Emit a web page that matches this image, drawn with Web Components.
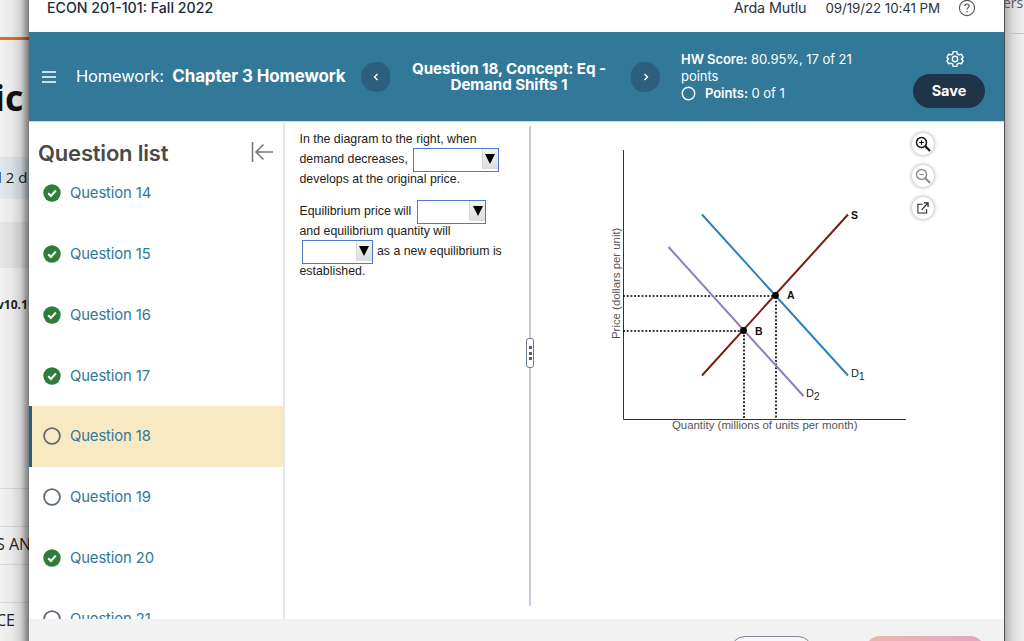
<!DOCTYPE html>
<html lang="en"><head><meta charset="utf-8"><title>Homework</title>
<style>
html,body{margin:0;padding:0;height:641px;overflow:hidden;background:#fff}
</style></head><body>
<desk-view>
  <back-left slot="left"></back-left>
  <hw-window slot="main">
    <top-bar></top-bar>
    <hw-bar></hw-bar>
    <hw-body>
      <q-list slot="list">
        <q-item state="done">Question 14</q-item>
        <q-item state="done">Question 15</q-item>
        <q-item state="done">Question 16</q-item>
        <q-item state="done">Question 17</q-item>
        <q-item state="open" current>Question 18</q-item>
        <q-item state="open">Question 19</q-item>
        <q-item state="done">Question 20</q-item>
        <q-item state="open">Question 21</q-item>
      </q-list>
      <q-text slot="text"></q-text>
      <graph-panel slot="graph"></graph-panel>
    </hw-body>
    <foot-bar></foot-bar>
  </hw-window>
  <back-right slot="right"></back-right>
</desk-view>
<script>
function def(name, css, html, extra){
  const tpl=document.createElement('template');
  tpl.innerHTML='<style>'+css+'</style>'+html;
  customElements.define(name,class extends HTMLElement{
    constructor(){super();this.attachShadow({mode:'open'}).appendChild(tpl.content.cloneNode(true));}
    connectedCallback(){if(extra)extra.call(this);}
  });
}
const INTER='Inter,"Liberation Sans",sans-serif', ARIAL='"Liberation Sans",Arial,sans-serif';

def('desk-view',`:host{display:grid;grid-template-columns:29px 975px 20px;height:641px;overflow:hidden}`,
`<slot name="left"></slot><slot name="main"></slot><slot name="right"></slot>`);

def('back-left',`:host{display:block;position:relative;height:641px;overflow:hidden;font-family:"Open Sans",sans-serif;color:#222;
 background:#f2f2f2}
 .shade{position:absolute;inset:0;background:linear-gradient(90deg,rgba(0,0,0,0) 0,rgba(0,0,0,.04) 40%,rgba(0,0,0,.14) 72%,rgba(0,0,0,.5) 100%)}
 .a{position:absolute;white-space:nowrap}
 .l{position:absolute;left:0;right:0;height:1px;background:#dcdcdc}`,
`<div class="a" style="left:0;top:37px;width:29px;height:3px;background:#d9732b"></div>
 <div class="a" style="left:-6px;top:76px;font-size:36px;font-weight:700;line-height:44px;color:#111">ic</div>
 <div class="a" style="left:0;top:157px;width:29px;height:42px;background:#dfe8ee"></div>
 <div class="a" style="left:-2px;top:167px;font-size:15px;line-height:20px">l 2 d</div>
 <div class="a" style="left:0;top:222px;width:29px;height:46px;background:#e6e6e6"></div>
 <div class="a" style="left:-3px;top:296px;font-size:12px;font-weight:700;line-height:18px">v10.1</div>
 <div class="l" style="top:488px"></div><div class="l" style="top:526px"></div><div class="l" style="top:564px"></div><div class="l" style="top:602px"></div>
 <div class="a" style="left:-4px;top:534px;font-size:16px;line-height:20px">S AN</div>
 <div class="a" style="left:-4px;top:610px;font-size:16px;line-height:20px">CE</div>
 <div class="shade"></div>`);

def('back-right',`:host{display:block;position:relative;height:641px;overflow:hidden;box-sizing:border-box;border-left:1px solid #4d4d4d;
 background:linear-gradient(90deg,#b5b5b5 0,#dedede 45%,#efefef 100%);font-family:"Open Sans",sans-serif;color:#555}
 div{position:absolute;left:-2px;top:-6px;font-size:14px;line-height:18px;white-space:nowrap}
 i{position:absolute;left:0;right:0;top:33px;height:1px;background:#c4c4c4}`,`<div>ers</div><i></i>`);

def('hw-window',`:host{display:flex;flex-direction:column;height:641px;background:#fff;overflow:hidden}`,`<slot></slot>`);

def('top-bar',`:host{display:flex;align-items:center;height:32px;box-sizing:border-box;padding:0 28px 16px 18px;font:500 14.2px/16px ${INTER};color:#1c2a3d;background:#fff;flex:none}
 .c{flex:1}.n{font-weight:400;font-size:14.3px;color:#2b3442;letter-spacing:-.1px}
 .d{margin-left:19px;font-size:13.4px}
 svg{margin-left:18px;display:block}`,
`<span class="c">ECON 201-101: Fall 2022</span><span class="n">Arda Mutlu</span><span class="n d">09/19/22 10:41 PM</span>
 <svg width="18" height="18" viewBox="0 0 18 18" fill="none" stroke="#555"><circle cx="9" cy="9" r="7.6" stroke-width="1.1"/><path d="M6.8 7.1c0-1.3 1-2.1 2.2-2.1s2.2.8 2.2 2c0 1.6-2.2 1.7-2.2 3.4" stroke-width="1.2"/><circle cx="9" cy="12.8" r=".8" fill="#555" stroke="none"/></svg>`);

def('hw-bar',`:host{display:flex;align-items:center;height:90px;background:#327899;color:#fff;font-family:${INTER};box-sizing:border-box;border-bottom:1px solid #cfd9e0;flex:none}
 .menu{width:14px;height:12px;margin-left:13px;flex:none;display:block}
 .hw{margin-left:20px;font-size:16.4px;line-height:20px;white-space:nowrap;width:285px;flex:none;letter-spacing:-.1px;margin-top:-1px}
 .hw b{font-weight:700;margin-left:4px;font-size:16.9px}
 .nav{width:29px;height:30px;background:#2c5f7e;border-radius:15px 13px 13px 15px;display:flex;align-items:center;justify-content:center;flex:none;margin-left:0}
 .title{width:226px;flex:none;text-align:center;font:700 15.2px/16px ${INTER};letter-spacing:-.1px;margin-left:6px;margin-right:9px;box-sizing:border-box;padding-left:0}
 .score{margin-left:21px;width:196px;flex:none;font:400 13px/17px ${INTER};letter-spacing:-.05px}
 .score b{font-weight:600}
 .pts{display:flex;align-items:center}
 .pts svg{margin-right:9px;display:block}
 .act{width:72px;flex:none;margin-left:36px;display:flex;flex-direction:column;align-items:center;gap:6px;padding-top:7px}
 .act svg{display:block;margin-left:12px;margin-top:-2px}
 .save{width:72px;height:34px;border-radius:17px;background:#203449;font:700 14.5px/34px ${INTER};text-align:center}`,
`<svg class="menu" viewBox="0 0 14 12" stroke="#fff" stroke-width="1.5"><path d="M0 1h14M0 6h14M0 11h14"/></svg>
 <div class="hw">Homework: <b>Chapter 3 Homework</b></div>
 <div class="nav"><svg width="6" height="8" viewBox="0 0 6 8" fill="none" stroke="#fff" stroke-width="1.4"><path d="M4.5 1 1.5 4l3 3"/></svg></div>
 <div class="title">Question 18, Concept: Eq -<br>Demand Shifts 1</div>
 <div class="nav" style="border-radius:13px 15px 15px 13px"><svg width="6" height="8" viewBox="0 0 6 8" fill="none" stroke="#fff" stroke-width="1.4"><path d="M1.5 1l3 3-3 3"/></svg></div>
 <div class="score"><div><b>HW Score:</b> 80.95%, 17 of 21</div><div>points</div>
 <div class="pts"><svg width="15" height="15" viewBox="0 0 15 15" fill="none" stroke="#fff" stroke-width="1.4"><circle cx="7.5" cy="7.5" r="6.2"/></svg><span><b>Points:</b> 0 of 1</span></div></div>
 <div class="act">
 <svg width="18" height="18" viewBox="0 0 24 24" fill="none" stroke="#fff" stroke-width="1.9" stroke-linejoin="round"><path d="M9.6 2.2h4.8l.7 3 2.3 1.3 3-.9 2.4 4.1-2.2 2.3l2.2 2.3-2.4 4.1-3-.9-2.3 1.3-.7 3H9.6l-.7-3-2.3-1.3-3 .9L1.200 14.300l2.200-2.300-2.200-2.300 2.400-4.100 3 .9 2.300-1.300z"/><circle cx="12" cy="12" r="3.600"/></svg>
 <div class="save">Save</div></div>`);

def('hw-body',`:host{display:flex;flex:1;min-height:0;overflow:hidden;background:#fff}`,
`<slot name="list"></slot><slot name="text"></slot><slot name="graph"></slot>`);

def('q-list',`:host{display:block;width:256px;box-sizing:border-box;flex:none;border-right:2px solid #e4e7ee;overflow:hidden;height:497px}
 h2{margin:0;height:41px;box-sizing:border-box;padding:17px 0 0 9px;font:600 22px/28px ${INTER};color:#4a4a4a;letter-spacing:-.2px;position:relative;overflow:visible}
 svg{position:absolute;left:222px;top:20px;display:block}`,
`<h2>Question list<svg width="22" height="20" viewBox="0 0 22 20" fill="none" stroke="#7a7a7a" stroke-width="1.6"><path d="M1.500 0v20M22 10H5M12.500 2.500 5 10l7.500 7.500"/></svg></h2><slot></slot>`);

def('q-item',`:host{display:flex;align-items:center;height:60.75px;box-sizing:border-box;padding-left:14px;font:400 14.8px/20px ${INTER};color:#2f7898;letter-spacing:-.1px}
 :host([current]){background:#f7eac3;box-shadow:inset 3px 0 0 #2c5f7e}
 svg{display:block;margin-right:9px;flex:none}`,
`<svg width="18" height="18" viewBox="0 0 18 18"></svg><slot></slot>`,
function(){const s=this.shadowRoot.querySelector('svg');
 s.innerHTML=this.getAttribute('state')==='done'
 ?'<circle cx="9" cy="9" r="8.700" fill="#2f7d3b"/><path d="M5.200 9.300l2.700 2.700 5-5.500" fill="none" stroke="#fff" stroke-width="2"/>'
 :'<circle cx="9" cy="9" r="7.900" fill="none" stroke="#5f6a78" stroke-width="1.800"/>';});

def('dd-select',`:host{display:inline-flex;justify-content:flex-end;box-sizing:border-box;height:24px;border:1px solid #4f78c8;vertical-align:middle;margin:-3px 0;background:#fff}
 b{display:flex;align-items:center;justify-content:center;width:15px;height:20px;background:linear-gradient(#f4f4f4,#dcdcdc);border-left:1px solid #d8d8d8;margin:0}
 svg{display:block}`,
`<b><svg width="10" height="10" viewBox="0 0 10 10"><path d="M0 0h10L5 10z" fill="#000"/></svg></b>`,
function(){this.style.width=this.getAttribute('w')+'px';});

def('q-text',`:host{display:block;width:245px;flex:none;box-sizing:border-box;padding:7px 0 0 14.5px;font:12.35px/20px ${ARIAL};color:#222}
 p{margin:0 0 12px;white-space:nowrap}`,
`<p>In the diagram to the right, when<br>demand decreases, <dd-select w="86" style="margin-left:1.500px"></dd-select><br>develops at the original price.</p>
 <p>Equilibrium price will <dd-select w="69" style="margin-left:2.500px"></dd-select><br>and equilibrium quantity will<br><dd-select w="71" style="margin-left:2px;margin-right:1px"></dd-select> as a new equilibrium is<br>established.</p>`);

def('zoom-btn',`:host{display:flex;align-items:center;justify-content:center;width:22px;height:22px;border-radius:50%;background:#fff;box-shadow:0 0 4px rgba(0,0,0,.4)}
 svg{display:block}`,`<slot></slot>`);

def('graph-panel',`:host{display:block;flex:1;position:relative;min-width:0;height:497px;font-family:${ARIAL}}
 .rule{position:absolute;left:-1px;top:4px;width:2px;height:480px;background:#c9ccd8}
 .grip{position:absolute;left:-4px;top:216px;width:6px;height:28px;border:1px solid #6a7a8a;border-radius:3px;background:#fff;display:flex;flex-direction:column;align-items:center;justify-content:center;gap:2.500px}
 .grip i{width:3px;height:3px;background:#55606c}
 svg.g{display:block;position:absolute;left:0;top:0}
 .z{position:absolute;left:382px;top:11px;display:flex;flex-direction:column;gap:10px}
 text{font-family:${ARIAL}}`,
`<div class="rule"></div><div class="grip"><i></i><i></i><i></i></div>
 <svg class="g" width="475" height="497" viewBox="530 122 475 497">
  <g fill="none">
   <path d="M623.500 150V419.500H906" stroke="#333" stroke-width="1"/>
   <path d="M623 296H775M623 331H743M776 297V419M744 331V419" stroke="#000" stroke-width="1.600" stroke-dasharray="2 1.700"/>
   <path d="M702 214.500 848 375.500" stroke="#2f7fbd" stroke-width="2"/>
   <path d="M668.500 247 803.500 396" stroke="#8a80bd" stroke-width="2"/>
   <path d="M702 375.500 848 214.500" stroke="#7c1a14" stroke-width="2"/>
  </g>
  <circle cx="775.500" cy="295.500" r="3.400"/><circle cx="743.500" cy="330.500" r="3.400"/>
  <g fill="#111" font-size="10.500" font-weight="700"><text x="851" y="219">S</text><text x="787" y="299">A</text><text x="755" y="335">B</text></g>
  <g fill="#222" font-size="11"><text x="851" y="377">D<tspan font-size="10" dy="3">1</tspan></text><text x="806" y="397">D<tspan font-size="10" dy="3">2</tspan></text></g>
  <text x="672" y="429" font-size="11.400" fill="#555">Quantity (millions of units per month)</text>
  <text transform="translate(620 339) rotate(-90)" font-size="11.400" fill="#555">Price (dollars per unit)</text>
 </svg>
 <div class="z">
  <zoom-btn><svg width="16" height="16" viewBox="0 0 16 16" fill="none" stroke="#111" stroke-width="1.500"><circle cx="6.500" cy="6.500" r="5"/><path d="M10.300 10.300 15 15" stroke-width="2.200"/><path d="M4.200 6.500h4.600M6.500 4.200v4.600" stroke-width="1.200"/></svg></zoom-btn>
  <zoom-btn><svg width="16" height="16" viewBox="0 0 16 16" fill="none" stroke="#8c8c8c" stroke-width="1.500"><circle cx="6.500" cy="6.500" r="5"/><path d="M10.300 10.300 15 15" stroke-width="2.200"/><path d="M4.200 6.500h4.600" stroke-width="1.200"/></svg></zoom-btn>
  <zoom-btn><svg width="12" height="12" viewBox="0 0 13 13" fill="none" stroke="#222" stroke-width="1.100"><path d="M6 2.500H1V12h9.500V7.500"/><path d="M5 8.500 11.500 1.500M7.500 1h4.500v4.500" stroke-width="1.300"/></svg></zoom-btn>
 </div>`);

def('foot-bar',`:host{display:flex;height:22px;background:#f2f2f2;box-sizing:border-box;padding:17px 0 0 701px;overflow:hidden;flex:none}
 .a{width:83px;height:30px;box-sizing:border-box;border:1.500px solid #7f8696;border-radius:16px;background:#f7f7f7;flex:none}
 .b{width:120px;height:30px;border-radius:16px;background:linear-gradient(90deg,#ecb7ad,#e4a7c6);margin-left:52px;flex:none}`,
`<div class="a"></div><div class="b"></div>`);
</script>
</body></html>
